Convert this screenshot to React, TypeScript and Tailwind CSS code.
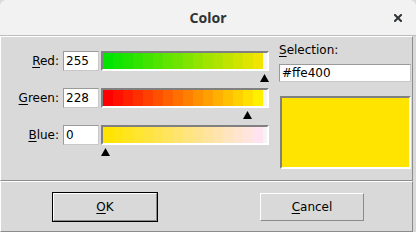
import React from "react";

type Kind = "r" | "g" | "b";

function Bar({ kind, value }: { kind: Kind; value: number }) {
  const cells = Array.from({ length: 16 }, (_, i) => {
    const l = i * 16;
    const c =
      kind === "r"
        ? `rgb(${l},228,0)`
        : kind === "g"
        ? `rgb(255,${l},0)`
        : `rgb(255,228,${l})`;
    return <div key={i} className="w-[10px] h-full shrink-0" style={{ background: c }} />;
  });
  return (
    <div className="w-[168px]">
      <div className="h-[20px] flex border-2 border-t-[#808080] border-l-[#808080] border-b-white border-r-white bg-[#f4f4f4]">
        {cells}
      </div>
      <div className="relative h-[17px]">
        <svg
          className="absolute top-[3px]"
          style={{ left: 4.7 + value * 0.622 - 4.5 }}
          width="9"
          height="8"
          viewBox="0 0 9 8"
        >
          <polygon points="0,8 4.5,0 9,8" fill="black" />
        </svg>
      </div>
    </div>
  );
}

function Row({
  first,
  rest,
  value,
  kind,
}: {
  first: string;
  rest: string;
  value: number;
  kind: Kind;
}) {
  return (
    <div className="flex items-start">
      <div className="w-[58px] h-[20px] leading-[20px] text-right">
        <span className="underline underline-offset-2">{first}</span>
        {rest}
      </div>
      <div className="ml-[4px] w-[36px] h-[20px] leading-[18px] bg-white border border-t-[#9a9a9a] border-l-[#9a9a9a] border-b-[#c8c8c8] border-r-[#c8c8c8] pl-[2px]">
        {value}
      </div>
      <div className="ml-[2px]">
        <Bar kind={kind} value={value} />
      </div>
    </div>
  );
}

function RaisedButton({
  first,
  rest,
  def,
}: {
  first: string;
  rest: string;
  def?: boolean;
}) {
  return (
    <div
      className={
        def
          ? "w-[106px] h-[30px] border border-black"
          : "w-[106px] h-[30px] border border-transparent"
      }
    >
      <div className="w-full h-full border border-t-white border-l-white border-b-[#8a8a8a] border-r-[#8a8a8a] flex items-center justify-center">
        <span>
          <span className="underline underline-offset-2">{first}</span>
          {rest}
        </span>
      </div>
    </div>
  );
}

export default function App() {
  return (
    <div className="w-[416px] h-[232px] bg-[#d9d9d9] flex flex-col text-[12px] text-black font-['DejaVu_Sans',sans-serif] overflow-hidden">
      {/* Title bar */}
      <div className="h-[36px] shrink-0 bg-[#f2f2f2] border-b border-[#bdbdbd] rounded-t-[6px] relative flex items-center justify-center">
        <span className="font-['Noto_Sans',sans-serif] font-bold text-[14px] text-[#2e3436]">
          Color
        </span>
        <svg
          className="absolute left-[394px] top-[14px]"
          width="8"
          height="8"
          viewBox="0 0 8 8"
        >
          <path d="M1 1 L7 7 M7 1 L1 7" stroke="#2e3436" strokeWidth="2" strokeLinecap="square" />
        </svg>
      </div>

      {/* Upper frame */}
      <div className="w-[413px] h-[145px] shrink-0 border border-t-white border-l-white border-b-[#8c8c8c] border-r-[#8c8c8c] flex">
        <div className="pt-[14px] flex flex-col">
          <Row first="R" rest="ed:" value={255} kind="r" />
          <Row first="G" rest="reen:" value={228} kind="g" />
          <Row first="B" rest="lue:" value={0} kind="b" />
        </div>
        <div className="ml-[10px] pt-[6px] flex flex-col">
          <div className="h-[14px] leading-[14px]">
            <span className="underline underline-offset-2">S</span>election:
          </div>
          <div className="mt-[7px] w-[132px] h-[18px] leading-[16px] bg-white border border-t-[#9a9a9a] border-l-[#9a9a9a] border-b-[#c8c8c8] border-r-[#c8c8c8] pl-[2px]">
            #ffe400
          </div>
          <div className="mt-[14px] ml-[1px] w-[131px] h-[73px] bg-[#ffe400] border-2 border-t-[#808080] border-l-[#808080] border-b-white border-r-white" />
        </div>
      </div>

      {/* Lower frame */}
      <div className="w-[413px] h-[51px] shrink-0 border border-t-white border-l-white border-b-[#8c8c8c] border-r-[#8c8c8c] flex items-start pt-[10px] pl-[51px] gap-[101px]">
        <RaisedButton first="O" rest="K" def />
        <RaisedButton first="C" rest="ancel" />
      </div>
    </div>
  );
}
